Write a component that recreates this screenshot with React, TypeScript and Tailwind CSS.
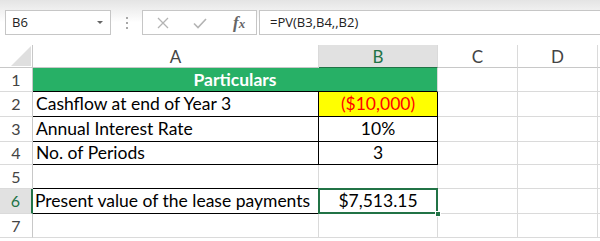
import React from 'react';

const grid = 'border-r border-b border-[#dadada]';

const RowHead = ({ n, active }: { n: number; active?: boolean }) => (
  <div
    className={`flex items-center justify-center text-[16px] border-b border-[#dadada] ${
      active ? 'bg-[#e1e1e1] text-[#217346] border-r-2 border-r-[#217346]' : 'bg-white text-[#444] border-r border-r-[#c8c8c8]'
    }`}
  >
    {n}
  </div>
);

const ColHead = ({ label, active }: { label: string; active?: boolean }) => (
  <div
    className={`flex items-center justify-center text-[17px] border-r border-[#dadada] border-b ${
      active ? 'bg-[#e1e1e1] text-[#217346] border-b-[#217346]' : 'bg-white text-[#444] border-b-[#c8c8c8]'
    }`}
  >
    {label}
  </div>
);

const App = () => {
  return (
    <div className="w-[600px] h-[241px] overflow-hidden bg-white font-['Lato',sans-serif] text-[#000]">
      {/* formula bar */}
      <div className="h-[45px] bg-gradient-to-b from-[#e4e4e4] via-white to-white pt-[10px]">
        <div className="flex items-center h-[25px] font-['Open_Sans',sans-serif] text-[13px] text-[#222]">
          <div className="ml-[5px] w-[106px] h-[25px] border border-[#c6c6c6] bg-white flex items-center pl-[6px] pr-[6px]">
            <span className="flex-1">B6</span>
            <svg width="8" height="5" viewBox="0 0 8 5">
              <polygon points="1,1 7,1 4,4" fill="#666" />
            </svg>
          </div>
          <div className="w-[31px] flex flex-col items-center gap-[3px]">
            <span className="w-[2px] h-[2px] bg-[#a8a8a8]" />
            <span className="w-[2px] h-[2px] bg-[#a8a8a8]" />
            <span className="w-[2px] h-[2px] bg-[#a8a8a8]" />
          </div>
          <div className="w-[115px] h-[25px] border border-[#c6c6c6] bg-white flex items-center">
            <svg className="ml-[13px]" width="14" height="14" viewBox="0 0 14 14">
              <path d="M2 2 L12 12 M12 2 L2 12" stroke="#b4b4b4" strokeWidth="1.3" fill="none" />
            </svg>
            <svg className="ml-[22px]" width="16" height="14" viewBox="0 0 16 14">
              <path d="M2 7.5 L6 11.5 L14 3" stroke="#b4b4b4" strokeWidth="1.6" fill="none" />
            </svg>
            <span className="ml-[25px] font-['Liberation_Serif',serif] italic font-bold text-[17px] text-[#666]">
              f<span className="text-[13px]">x</span>
            </span>
          </div>
          <div className="ml-[2px] flex-1 h-[25px] border border-[#c6c6c6] border-r-0 bg-white flex items-center pl-[10px]">
            =PV(B3,B4,,B2)
          </div>
        </div>
      </div>

      {/* sheet */}
      <div className="grid grid-cols-[33px_286px_119px_80px_80px_1fr] grid-rows-[23px_24px_25px_25px_23px_24px_25px_24px_1fr] text-[17.5px] leading-none">
        {/* header row */}
        <div className="relative bg-white border-r border-b border-[#c8c8c8]">
          <svg className="absolute right-[1px] bottom-[1px]" width="20" height="20" viewBox="0 0 20 20">
            <polygon points="0,20 20,20 20,0" fill="#dfdfdf" />
          </svg>
        </div>
        <ColHead label="A" />
        <ColHead label="B" active />
        <ColHead label="C" />
        <ColHead label="D" />
        <div className="border-b border-[#c8c8c8]" />

        {/* row 1 */}
        <RowHead n={1} />
        <div className="col-span-2 bg-[#27b066] border-b border-black border-r border-r-[#dadada] flex items-center justify-center text-white font-bold">
          Particulars
        </div>
        <div className={grid} />
        <div className={grid} />
        <div className="border-b border-[#dadada]" />

        {/* row 2 */}
        <RowHead n={2} />
        <div className="border-r border-b border-black flex items-center pl-[3px]">Cashflow at end of Year 3</div>
        <div className="border-r border-b border-black bg-[#ffff00] text-[#ff0000] flex items-center justify-center">($10,000)</div>
        <div className={grid} />
        <div className={grid} />
        <div className="border-b border-[#dadada]" />

        {/* row 3 */}
        <RowHead n={3} />
        <div className="border-r border-b border-black flex items-center pl-[3px]">Annual Interest Rate</div>
        <div className="border-r border-b border-black flex items-center justify-center">10%</div>
        <div className={grid} />
        <div className={grid} />
        <div className="border-b border-[#dadada]" />

        {/* row 4 */}
        <RowHead n={4} />
        <div className="border-r border-b border-black flex items-center pl-[3px]">No. of Periods</div>
        <div className="border-r border-b border-black flex items-center justify-center">3</div>
        <div className={grid} />
        <div className={grid} />
        <div className="border-b border-[#dadada]" />

        {/* row 5 */}
        <RowHead n={5} />
        <div className="border-r border-r-[#dadada] border-b border-b-black" />
        <div className="border-r border-r-[#dadada] border-b border-b-black" />
        <div className={grid} />
        <div className={grid} />
        <div className="border-b border-[#dadada]" />

        {/* row 6 */}
        <RowHead n={6} active />
        <div className="border-r border-b border-black flex items-center pl-[2px]">Present value of the lease payments</div>
        <div className="relative border-r border-b border-black flex items-center justify-center">
          $7,513.15
          <div className="absolute -left-[1px] -top-[1px] -right-[1px] -bottom-[1px] border-2 border-[#217346] pointer-events-none" />
          <div className="absolute -right-[4px] -bottom-[4px] w-[6px] h-[6px] bg-[#217346] border border-white" />
        </div>
        <div className={grid} />
        <div className={grid} />
        <div className="border-b border-[#dadada]" />

        {/* row 7 */}
        <RowHead n={7} />
        <div className={grid} />
        <div className={grid} />
        <div className={grid} />
        <div className={grid} />
        <div className="border-b border-[#dadada]" />

        {/* row 8 */}
        <div className="border-r border-[#c8c8c8]" />
        <div className="border-r border-[#dadada]" />
        <div className="border-r border-[#dadada]" />
        <div className="border-r border-[#dadada]" />
        <div className="border-r border-[#dadada]" />
        <div />
      </div>
    </div>
  );
};

export default App;
